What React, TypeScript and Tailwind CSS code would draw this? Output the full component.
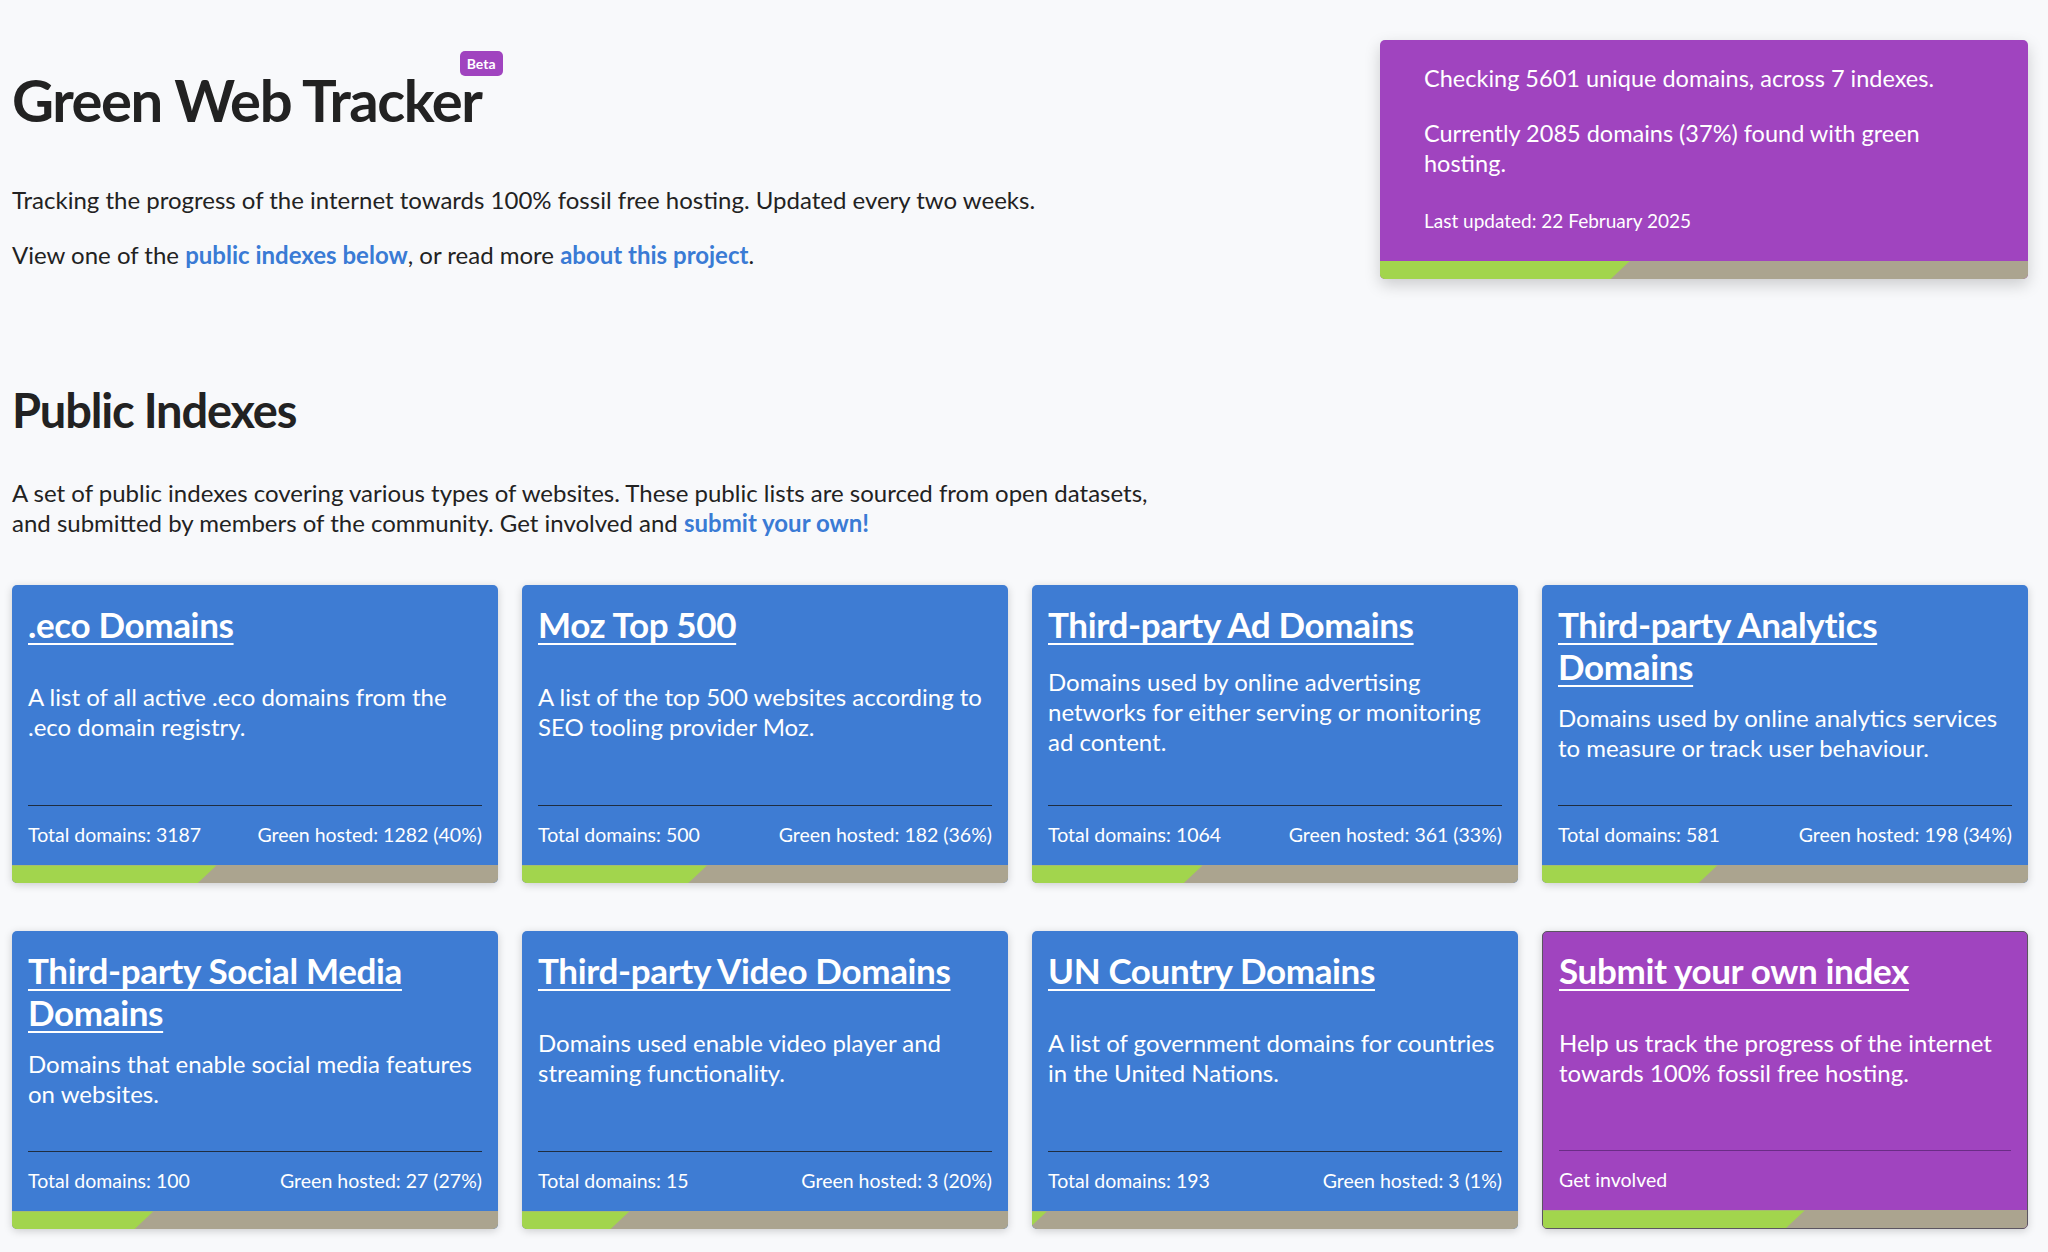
const indexes = [
  {
    title: '.eco Domains',
    desc: 'A list of all active .eco domains from the .eco domain registry.',
    total: 3187,
    green: 1282,
    pct: 40,
  },
  {
    title: 'Moz Top 500',
    desc: 'A list of the top 500 websites according to SEO tooling provider Moz.',
    total: 500,
    green: 182,
    pct: 36,
  },
  {
    title: 'Third-party Ad Domains',
    desc: 'Domains used by online advertising networks for either serving or monitoring ad content.',
    total: 1064,
    green: 361,
    pct: 33,
  },
  {
    title: 'Third-party Analytics Domains',
    desc: 'Domains used by online analytics services to measure or track user behaviour.',
    total: 581,
    green: 198,
    pct: 34,
  },
  {
    title: 'Third-party Social Media Domains',
    desc: 'Domains that enable social media features on websites.',
    total: 100,
    green: 27,
    pct: 27,
  },
  {
    title: 'Third-party Video Domains',
    desc: 'Domains used enable video player and streaming functionality.',
    total: 15,
    green: 3,
    pct: 20,
  },
  {
    title: 'UN Country Domains',
    desc: 'A list of government domains for countries in the United Nations.',
    total: 193,
    green: 3,
    pct: 1,
  },
];

function ProgressBar({ pct }: { pct: number }) {
  return (
    <div className="h-[18px] w-full bg-[#aba48f] shrink-0">
      <div
        className="h-full bg-[#a2d54d] [clip-path:polygon(0_0,100%_0,calc(100%_-_19px)_100%,0_100%)]"
        style={{ width: `calc(${pct}% + 10px)` }}
      />
    </div>
  );
}

function IndexCard({ title, desc, total, green, pct }: (typeof indexes)[number]) {
  return (
    <div className="flex flex-col rounded-[5px] overflow-hidden bg-[#3e7cd3] text-white shadow-[0_2px_8px_rgba(0,0,0,0.18)]">
      <div className="flex-1 flex flex-col justify-between gap-4 px-4 pt-[18px] pb-[18px]">
        <a href="#" className="text-[35px] leading-[42px] font-bold underline decoration-2 underline-offset-[5px] tracking-[-0.01em]">
          {title}
        </a>
        <p className="text-[24px] leading-[30px]">{desc}</p>
        <div className="pt-[26px]">
          <div className="border-t border-[#1f2d40] pt-[17px] flex justify-between text-[19.5px] leading-[24px]">
            <span>Total domains: {total}</span>
            <span>
              Green hosted: {green} ({pct}%)
            </span>
          </div>
        </div>
      </div>
      <ProgressBar pct={pct} />
    </div>
  );
}

export default function App() {
  return (
    <div className="min-h-screen bg-[#f8f9fb] text-[#222] font-['Lato','Noto_Sans',sans-serif] pl-3 pr-[20px] pt-10 pb-16">
      {/* Header */}
      <div className="flex justify-between items-start">
        <div className="pt-[25px]">
          <h1 className="relative inline-block text-[58px] leading-[1.2] font-bold tracking-tight">
            Green Web Tracker
            <span className="absolute -right-[21px] -top-[14px] bg-[#a044bf] text-white text-[14px] leading-[25px] font-bold px-[7px] rounded-[5px] tracking-normal">
              Beta
            </span>
          </h1>
          <p className="mt-[50px] text-[24px] leading-[30px]">
            Tracking the progress of the internet towards 100% fossil free hosting. Updated every two weeks.
          </p>
          <p className="mt-[25px] text-[24px] leading-[30px]">
            View one of the{' '}
            <a href="#" className="font-bold text-[#3a7bd5]">
              public indexes below
            </a>
            , or read more{' '}
            <a href="#" className="font-bold text-[#3a7bd5]">
              about this project
            </a>
            .
          </p>
        </div>
        <div className="w-[648px] rounded-[5px] overflow-hidden bg-[#a044bf] text-white shadow-[0_6px_16px_rgba(0,0,0,0.18)]">
          <div className="pl-[44px] pr-[44px] pt-[23px] pb-[28px]">
            <p className="text-[23.5px] leading-[30px]">Checking 5601 unique domains, across 7 indexes.</p>
            <p className="mt-[25px] text-[23.5px] leading-[30px]">Currently 2085 domains (37%) found with green hosting.</p>
            <p className="mt-[31px] text-[19px] leading-[24px]">Last updated: 22 February 2025</p>
          </div>
          <ProgressBar pct={37} />
        </div>
      </div>

      {/* Public indexes */}
      <h2 className="mt-[103px] text-[47px] leading-[1.2] font-bold tracking-tight">Public Indexes</h2>
      <p className="mt-[40px] max-w-[1150px] text-[24px] leading-[30px]">
        A set of public indexes covering various types of websites. These public lists are sourced from open datasets,
        and submitted by members of the community. Get involved and{' '}
        <a href="#" className="font-bold text-[#3a7bd5]">
          submit your own!
        </a>
      </p>

      <div className="mt-[47px] grid grid-cols-4 gap-x-6 gap-y-12">
        {indexes.map((d) => (
          <IndexCard key={d.title} {...d} />
        ))}
        <div className="flex flex-col rounded-[5px] overflow-hidden bg-[#a044bf] text-white border border-[#5b5560] shadow-[0_2px_8px_rgba(0,0,0,0.18)]">
          <div className="flex-1 flex flex-col justify-between gap-4 px-4 pt-[17px] pb-[18px]">
            <a href="#" className="text-[35px] leading-[42px] font-bold underline decoration-2 underline-offset-[5px] tracking-[-0.01em]">
              Submit your own index
            </a>
            <p className="text-[24px] leading-[30px]">Help us track the progress of the internet towards 100% fossil free hosting.</p>
            <div className="pt-[26px]">
              <div className="border-t border-[#6a2c86] pt-[17px] text-[19.5px] leading-[24px]">Get involved</div>
            </div>
          </div>
          <ProgressBar pct={52} />
        </div>
      </div>
    </div>
  );
}
